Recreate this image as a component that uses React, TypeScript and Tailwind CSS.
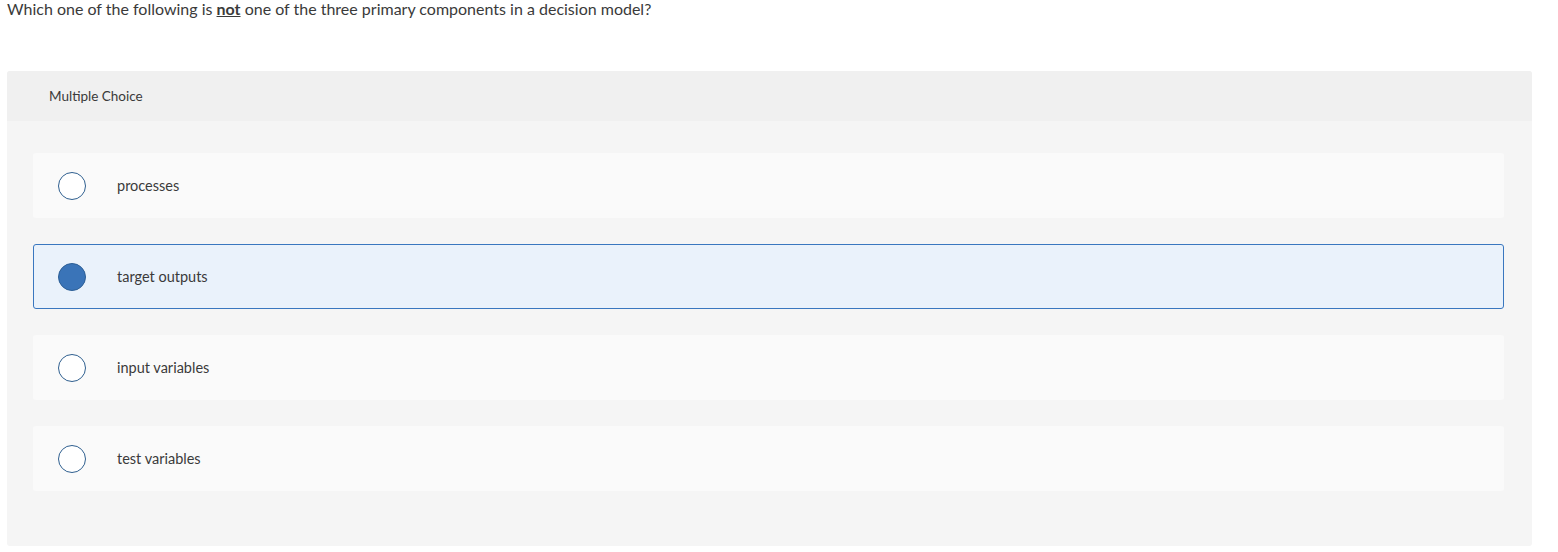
import React from 'react';

const OPTIONS = [
  { label: 'processes', selected: false },
  { label: 'target outputs', selected: true },
  { label: 'input variables', selected: false },
  { label: 'test variables', selected: false },
];

function Radio({ selected }: { selected: boolean }) {
  return selected ? (
    <span className="block w-[28px] h-[28px] rounded-full bg-[#3a74b8] border border-[#2d5f96] shrink-0" />
  ) : (
    <span className="block w-[28px] h-[28px] rounded-full bg-white border-[1.5px] border-[#2f5f8f] shrink-0" />
  );
}

export default function App() {
  return (
    <div className="min-h-screen bg-white text-[#3a3a3a] font-['Lato','Open_Sans',sans-serif]">
      <p className="pl-[7px] text-[16px] leading-[17px] h-[19px]">
        Which one of the following is <span className="font-bold underline">not</span> one of the three primary
        components in a decision model?
      </p>

      <div className="mt-[52px] ml-[7px] w-[1525px] rounded-[3px] bg-[#f5f5f5] overflow-hidden">
        <div className="h-[50px] bg-[#f0f0f0] flex items-center pl-[42px] pt-[1px] text-[13.5px]">
          Multiple Choice
        </div>

        <div className="flex flex-col gap-[26px] pt-[32px] pb-[55px] pl-[26px] pr-[28px]">
          {OPTIONS.map((o) => (
            <div
              key={o.label}
              className={
                o.selected
                  ? 'h-[65px] rounded-[3px] border border-[#3a77bf] bg-[#eaf2fb] flex items-center pl-[24px]'
                  : 'h-[65px] rounded-[3px] border border-transparent bg-[#fafafa] flex items-center pl-[24px]'
              }
            >
              <Radio selected={o.selected} />
              <span className="ml-[31px] text-[14.5px]">{o.label}</span>
            </div>
          ))}
        </div>
      </div>
    </div>
  );
}
